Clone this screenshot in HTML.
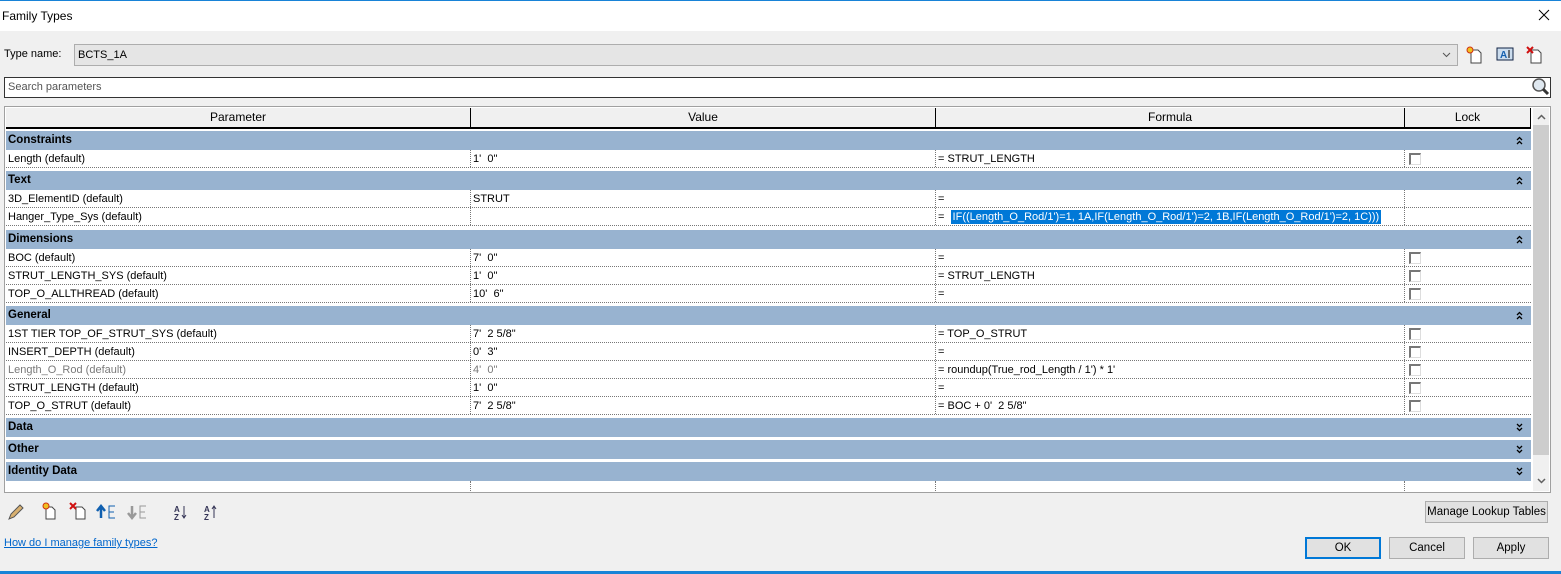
<!DOCTYPE html>
<html><head><meta charset="utf-8"><style>
*{box-sizing:border-box;margin:0;padding:0}
body{width:1561px;height:574px;background:#f0f0f0;font-family:"Liberation Sans",sans-serif;font-size:11px;color:#000;position:relative;overflow:hidden}
.a{position:absolute}
.title{left:0;top:0;width:1561px;height:31px;background:#fff;border-top:1px solid #1883d7}
.grid{left:4px;top:106px;width:1547px;height:387px;background:#fff;border:1px solid #a0a0a0}
.hd{position:absolute;top:108px;height:21px;background:#f0f0f0;border-right:1px solid #000;border-bottom:2px solid #000;text-align:center;line-height:19px;font-size:12px}
.g{position:absolute;left:6px;width:1525px;height:19px;background:#98b3d0;font-weight:bold;line-height:19px;padding-left:2px;font-size:11.5px}
.g svg{position:absolute;right:8px;top:5px}
.r{position:absolute;left:6px;width:1525px;height:18px;border-bottom:1px dotted #777;line-height:18px}
.r div{position:absolute;top:0;height:17px;padding-left:2px;white-space:nowrap}
.c1{left:0}.c2{left:464px;border-left:1px dotted #777}.c3{left:929px;border-left:1px dotted #777}.c4{left:1398px;border-left:1px dotted #777;width:1px}
.cb{position:absolute;left:1403px;top:3px;width:12px;height:12px;border-top:2px solid #777;border-left:2px solid #777;border-right:1px solid #ddd;border-bottom:1px solid #ddd}
.gr{color:#7a7a7a}
.btn{position:absolute;height:22px;background:#e1e1e1;border:1px solid #adadad;text-align:center;line-height:20px;white-space:nowrap;font-size:11.5px}
</style></head><body>
<div class="a title"><div class="a" style="left:2px;top:8px;font-size:12px">Family Types</div>
<svg class="a" style="left:1538px;top:8px" width="12" height="12"><path d="M1 1l10 10M11 1L1 11" stroke="#000" stroke-width="1"/></svg></div>
<div class="a" style="left:4px;top:48px">Type name:</div>
<div class="a" style="left:74px;top:44px;width:1384px;height:22px;background:#e5e5e5;border:1px solid #adadad;padding:4px 0 0 3px">BCTS_1A<svg class="a" style="right:6px;top:7px" width="9" height="6"><path d="M1 1l3.5 3.5L8 1" stroke="#555" fill="none"/></svg></div>
<svg class="a" style="left:1466px;top:46px" width="18" height="18"><path d="M5 4h7l3 3v10H5z" fill="#fff" stroke="#444"/><circle cx="4" cy="4" r="3" fill="#f0c020" stroke="#d03010"/></svg>
<svg class="a" style="left:1496px;top:47px" width="18" height="15"><rect x="1" y="1" width="16" height="12" fill="#cde" stroke="#124"/><text x="4" y="11" font-size="10" font-weight="bold" fill="#1460b0" font-family="Liberation Sans">A</text><line x1="13" y1="3" x2="13" y2="11" stroke="#000"/></svg>
<svg class="a" style="left:1526px;top:46px" width="18" height="18"><path d="M5 4h7l3 3v10H5z" fill="#fff" stroke="#444"/><path d="M1 1l6 6M7 1l-6 6" stroke="#d01010" stroke-width="2"/></svg>
<div class="a" style="left:4px;top:77px;width:1547px;height:21px;background:#fff;border:1px solid #333;padding:3px 0 0 3px;color:#555">Search parameters</div>
<svg class="a" style="left:1531px;top:77px" width="19" height="19"><circle cx="8" cy="8" r="6" fill="#dfe8f0" stroke="#555" stroke-width="1.5"/><path d="M12 12l5 5" stroke="#333" stroke-width="3"/></svg>
<div class="a grid"></div>
<div class="hd" style="left:6px;width:465px">Parameter</div>
<div class="hd" style="left:471px;width:465px">Value</div>
<div class="hd" style="left:936px;width:469px">Formula</div>
<div class="hd" style="left:1405px;width:126px">Lock</div>
<div class="a" style="left:1533px;top:108px;width:16px;height:383px;background:#f0f0f0"></div>
<div class="a" style="left:1533px;top:125px;width:16px;height:330px;background:#cdcdcd"></div>
<svg class="a" style="left:1537px;top:114px" width="9" height="6"><path d="M1 5l3.5-3.5L8 5" stroke="#606060" stroke-width="1.5" fill="none"/></svg>
<svg class="a" style="left:1537px;top:478px" width="9" height="6"><path d="M1 1l3.5 3.5L8 1" stroke="#606060" stroke-width="1.5" fill="none"/></svg>

<div class="g" style="top:131px">Constraints<svg width="7" height="9"><path d="M1 4l2.5-2.5L6 4M1 8l2.5-2.5L6 8" stroke="#000" stroke-width="1.3" fill="none"/></svg></div>
<div class="r" style="top:150px"><div class="c1">Length (default)</div><div class="c2">1'&nbsp; 0"</div><div class="c3">= STRUT_LENGTH</div><div class="c4"></div><i class="cb"></i></div>
<div class="g" style="top:171px">Text<svg width="7" height="9"><path d="M1 4l2.5-2.5L6 4M1 8l2.5-2.5L6 8" stroke="#000" stroke-width="1.3" fill="none"/></svg></div>
<div class="r" style="top:190px"><div class="c1">3D_ElementID (default)</div><div class="c2">STRUT</div><div class="c3">=</div><div class="c4"></div></div>
<div class="r" style="top:208px"><div class="c1">Hanger_Type_Sys (default)</div><div class="c2"></div><div class="c3">= &nbsp;<span style="background:#0078d7;color:#fff;padding:1px 2px">IF((Length_O_Rod/1')=1, 1A,IF(Length_O_Rod/1')=2, 1B,IF(Length_O_Rod/1')=2, 1C)))</span></div><div class="c4"></div></div>
<div class="g" style="top:230px">Dimensions<svg width="7" height="9"><path d="M1 4l2.5-2.5L6 4M1 8l2.5-2.5L6 8" stroke="#000" stroke-width="1.3" fill="none"/></svg></div>
<div class="r" style="top:249px"><div class="c1">BOC (default)</div><div class="c2">7'&nbsp; 0"</div><div class="c3">=</div><div class="c4"></div><i class="cb"></i></div>
<div class="r" style="top:267px"><div class="c1">STRUT_LENGTH_SYS (default)</div><div class="c2">1'&nbsp; 0"</div><div class="c3">= STRUT_LENGTH</div><div class="c4"></div><i class="cb"></i></div>
<div class="r" style="top:285px"><div class="c1">TOP_O_ALLTHREAD (default)</div><div class="c2">10'&nbsp; 6"</div><div class="c3">=</div><div class="c4"></div><i class="cb"></i></div>
<div class="g" style="top:306px">General<svg width="7" height="9"><path d="M1 4l2.5-2.5L6 4M1 8l2.5-2.5L6 8" stroke="#000" stroke-width="1.3" fill="none"/></svg></div>
<div class="r" style="top:325px"><div class="c1">1ST TIER TOP_OF_STRUT_SYS (default)</div><div class="c2">7'&nbsp; 2 5/8"</div><div class="c3">= TOP_O_STRUT</div><div class="c4"></div><i class="cb"></i></div>
<div class="r" style="top:343px"><div class="c1">INSERT_DEPTH (default)</div><div class="c2">0'&nbsp; 3"</div><div class="c3">=</div><div class="c4"></div><i class="cb"></i></div>
<div class="r gr" style="top:361px"><div class="c1">Length_O_Rod (default)</div><div class="c2">4'&nbsp; 0"</div><div class="c3" style="color:#000">= roundup(True_rod_Length / 1') * 1'</div><div class="c4"></div><i class="cb"></i></div>
<div class="r" style="top:379px"><div class="c1">STRUT_LENGTH (default)</div><div class="c2">1'&nbsp; 0"</div><div class="c3">=</div><div class="c4"></div><i class="cb"></i></div>
<div class="r" style="top:397px"><div class="c1">TOP_O_STRUT (default)</div><div class="c2">7'&nbsp; 2 5/8"</div><div class="c3">= BOC + 0'&nbsp; 2 5/8"</div><div class="c4"></div><i class="cb"></i></div>
<div class="g" style="top:418px">Data<svg width="7" height="9"><path d="M1 1l2.5 2.5L6 1M1 5l2.5 2.5L6 5" stroke="#000" stroke-width="1.3" fill="none"/></svg></div>
<div class="g" style="top:440px">Other<svg width="7" height="9"><path d="M1 1l2.5 2.5L6 1M1 5l2.5 2.5L6 5" stroke="#000" stroke-width="1.3" fill="none"/></svg></div>
<div class="g" style="top:462px">Identity Data<svg width="7" height="9"><path d="M1 1l2.5 2.5L6 1M1 5l2.5 2.5L6 5" stroke="#000" stroke-width="1.3" fill="none"/></svg></div>
<div class="r" style="top:481px;height:10px;border:none"><div class="c2" style="height:10px"></div><div class="c3" style="height:10px"></div><div class="c4" style="height:10px"></div></div>

<svg class="a" style="left:6px;top:502px" width="220" height="20">
<path d="M3 17l2-5 9-9 3 3-9 9z" fill="#d8b070" stroke="#555"/>
<path d="M40 5h6l3 3v9h-9z" fill="#fff" stroke="#444"/><circle cx="40" cy="4" r="3" fill="#f0c020" stroke="#d03010"/>
<path d="M70 5h6l3 3v9h-9z" fill="#fff" stroke="#444"/><path d="M64 1l6 6M70 1l-6 6" stroke="#d01010" stroke-width="2"/>
<path d="M95 16V5M91 9l4-5 4 5" stroke="#1060b0" stroke-width="2.5" fill="none"/><path d="M109 4h-6v12h6M103 10h5" stroke="#1060b0" fill="none"/>
<path d="M126 4v11M122 11l4 5 4-5" stroke="#999" stroke-width="2.5" fill="none"/><path d="M140 4h-6v12h6M134 10h5" stroke="#999" fill="none"/>
<text x="168" y="10" font-size="8" font-weight="bold" fill="#335">A</text><text x="168" y="18" font-size="8" font-weight="bold" fill="#335">Z</text><path d="M178 4v12M176 13l2 3 2-3" stroke="#335" fill="none"/>
<text x="198" y="10" font-size="8" font-weight="bold" fill="#335">A</text><text x="198" y="18" font-size="8" font-weight="bold" fill="#335">Z</text><path d="M208 4v12M206 7l2-3 2 3" stroke="#335" fill="none"/>
</svg>
<div class="a" style="left:4px;top:537px;color:#0066cc;text-decoration:underline;font-size:11px">How do I manage family types?</div>
<div class="btn" style="left:1425px;top:501px;width:123px">Manage Lookup Tables</div>
<div class="btn" style="left:1305px;top:537px;width:76px;border:2px solid #0078d7;line-height:18px">OK</div>
<div class="btn" style="left:1389px;top:537px;width:76px">Cancel</div>
<div class="btn" style="left:1473px;top:537px;width:76px">Apply</div>
<div class="a" style="left:0;top:571px;width:1561px;height:3px;background:#1883d7"></div>
</body></html>
